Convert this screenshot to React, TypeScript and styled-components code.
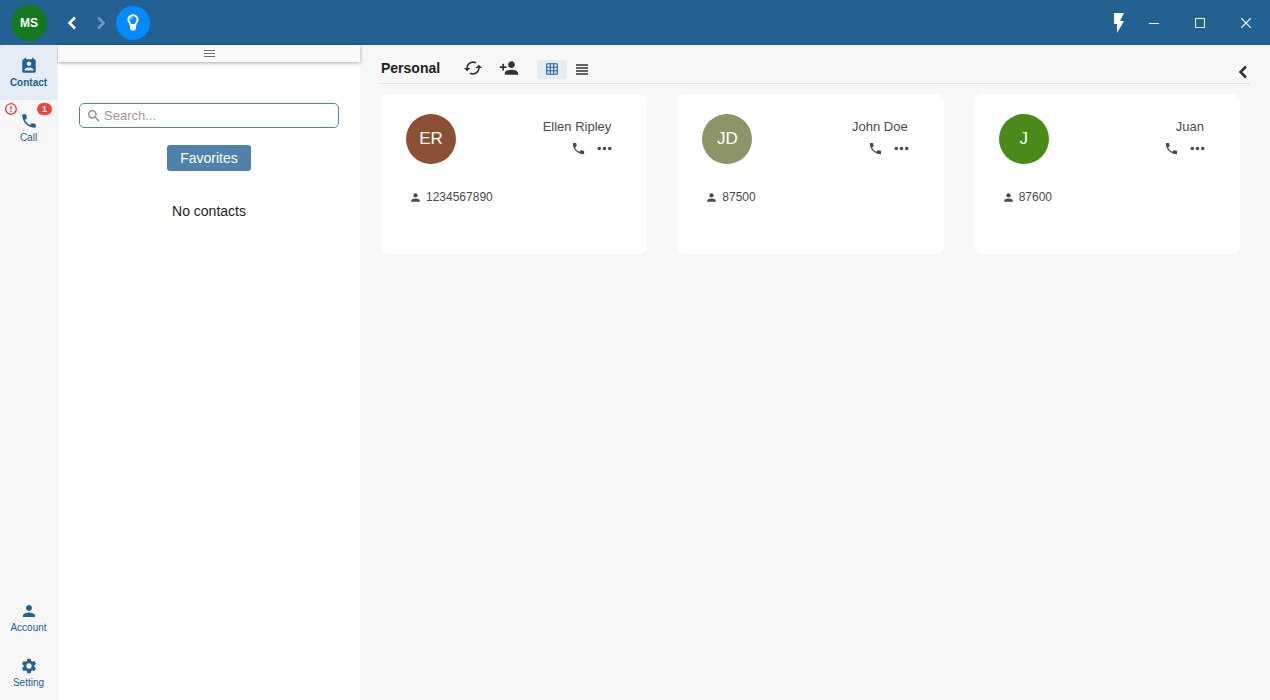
import React from 'react';
import styled, { createGlobalStyle, css } from 'styled-components';
import {
  MdCached,
  MdErrorOutline,
  MdFlashOn,
  MdGridOn,
  MdMoreHoriz,
  MdPermContactCalendar,
  MdPerson,
  MdPersonAdd,
  MdPhone,
  MdSearch,
  MdSettings,
} from 'react-icons/md';

const Global = createGlobalStyle`
  * { box-sizing: border-box; }
  body {
    margin: 0;
    font-family: "Liberation Sans", Arial, sans-serif;
    font-size: 14px;
    color: #212121;
    background: #f7f7f7;
  }
  button { font: inherit; color: inherit; border: 0; padding: 0; background: none; cursor: pointer; }
  svg { display: block; flex: none; }
`;

const Shell = styled.div`
  display: flex;
  flex-direction: column;
  min-height: 100vh;
`;

const TitleBar = styled.header`
  display: flex;
  align-items: center;
  height: 45px;
  padding: 0 1px 0 11px;
  background: #236192;
  color: #fff;
`;

const Avatar = styled.span<{ $color: string; $size: number }>`
  display: flex;
  flex: none;
  align-items: center;
  justify-content: center;
  width: ${(p) => p.$size}px;
  height: ${(p) => p.$size}px;
  border-radius: 50%;
  background: ${(p) => p.$color};
  color: #fff;
  font-size: 17px;
`;

const UserButton = styled.button`
  ${Avatar} { font-size: 12px; font-weight: bold; }
`;

const History = styled.nav`
  display: flex;
  align-items: center;
  gap: 14px;
  margin: 0 8px 0 17px;
`;

const ArrowButton = styled.button`
  display: flex;
  align-items: center;
  justify-content: center;
  width: 15px;
  height: 20px;
  &:disabled { opacity: 0.35; }
`;

const TipButton = styled.button`
  display: flex;
  align-items: center;
  justify-content: center;
  width: 34px;
  height: 34px;
  border-radius: 50%;
  background: #058aff;
`;

const WindowControls = styled.div`
  display: flex;
  align-items: center;
  margin-left: auto;
`;

const WindowButton = styled.button<{ $narrow?: boolean }>`
  display: flex;
  align-items: center;
  justify-content: center;
  width: ${(p) => (p.$narrow ? 24 : 46)}px;
  height: 45px;
`;

const Body = styled.div`
  display: flex;
  flex: 1;
`;

const Rail = styled.nav`
  display: flex;
  flex-direction: column;
  width: 58px;
  border-right: 1px solid #f0f0f0;
`;

const RailButton = styled.button<{ $active?: boolean; $bottom?: boolean }>`
  position: relative;
  display: flex;
  flex-direction: column;
  align-items: center;
  gap: 2px;
  height: 55px;
  padding-top: 12px;
  font-size: 10px;
  line-height: 12px;
  color: #236192;
  ${(p) => p.$active && css`background: #e4ecf6; font-weight: bold;`}
  ${(p) => p.$bottom && css`margin-top: auto;`}
`;

const Badge = styled.span`
  position: absolute;
  top: 3px;
  right: 5px;
  width: 15px;
  height: 12px;
  border-radius: 6px;
  background: #f44336;
  color: #fff;
  font-size: 9px;
  font-weight: bold;
  text-align: center;
`;

const Alert = styled.span`
  position: absolute;
  top: 2px;
  left: 4px;
  color: #e02020;
`;

const Sidebar = styled.aside`
  display: flex;
  flex-direction: column;
  align-items: center;
  width: 302px;
  background: #fff;
`;

const Handle = styled.button`
  display: flex;
  align-items: center;
  justify-content: center;
  width: 100%;
  height: 17px;
  background: #fafafa;
  color: #707070;
  box-shadow: 0 1px 4px rgba(0, 0, 0, 0.35);
`;

const SearchBox = styled.label`
  display: flex;
  align-items: center;
  gap: 2px;
  width: 260px;
  height: 25px;
  margin-top: 41px;
  padding: 0 6px;
  border: 1px solid #4f81ab;
  border-radius: 5px;
  color: #8a8a8a;
`;

const SearchInput = styled.input`
  flex: 1;
  min-width: 0;
  padding: 0;
  border: 0;
  outline: 0;
  background: none;
  font: inherit;
  font-size: 13px;
  &::placeholder { color: #999; opacity: 1; }
`;

const FavoritesButton = styled.button`
  width: 84px;
  height: 26px;
  margin-top: 17px;
  border-radius: 3px;
  background: #4f81ab;
  color: #fff;
`;

const EmptyText = styled.p`
  margin: 32px 0 0;
  line-height: 16px;
`;

const Main = styled.main`
  flex: 1;
  min-width: 0;
  padding: 0 20px 0 21px;
`;

const Toolbar = styled.div`
  display: flex;
  align-items: center;
  height: 39px;
  padding-top: 8px;
  border-bottom: 1px solid #e2e2e2;
  color: #333;
`;

const Heading = styled.h1`
  margin: 0 18px 0 0;
  font-size: 14px;
  line-height: 16px;
  color: #212121;
`;

const IconButton = styled.button<{ $active?: boolean }>`
  display: flex;
  align-items: center;
  justify-content: center;
  width: 30px;
  height: 19px;
  border-radius: 4px;
  ${(p) => p.$active && css`background: #e4ecf6; color: #236192;`}
`;

const Actions = styled.div`
  display: flex;
  gap: 6px;
  margin-right: 13px;
`;

const ViewSwitch = styled.div`
  display: flex;
  padding-top: 2px;
`;

const CollapseButton = styled.button`
  display: flex;
  align-self: flex-end;
  margin: 0 2px 4px auto;
`;

const Cards = styled.ul`
  display: grid;
  grid-template-columns: repeat(3, 1fr);
  gap: 30px;
  margin: 10px 10px 0 0;
  padding: 0;
  list-style: none;
`;

const Card = styled.li`
  height: 160px;
  padding: 20px 32px 0 25px;
  border-radius: 8px;
  background: #fff;
  color: #4a4a4a;
`;

const CardTop = styled.div`
  display: flex;
  justify-content: space-between;
`;

const CardInfo = styled.div`
  display: flex;
  flex-direction: column;
  align-items: flex-end;
  gap: 2px;
  padding-top: 4px;
`;

const Name = styled.h2`
  margin: 0 4px 0 0;
  font-size: 13px;
  font-weight: normal;
  line-height: 18px;
`;

const CardActions = styled.div`
  display: flex;
  align-items: center;
  gap: 8px;
`;

const Extension = styled.p`
  display: flex;
  align-items: center;
  gap: 4px;
  margin: 25px 0 0 3px;
  font-size: 12px;
  line-height: 16px;
`;

const contacts = [
  { name: 'Ellen Ripley', initials: 'ER', number: '1234567890', color: '#8b4f33' },
  { name: 'John Doe', initials: 'JD', number: '87500', color: '#8d9467' },
  { name: 'Juan', initials: 'J', number: '87600', color: '#4a8a18' },
];

const Chevron = ({ flip = false }: { flip?: boolean }) => (
  <svg width="10" height="14" viewBox="0 0 10 14" fill="none" stroke="currentColor" strokeWidth="2.5">
    <path d={flip ? 'M2 1.500 7.500 7 2 12.500' : 'M8 1.500 2.500 7 8 12.500'} />
  </svg>
);

const Bulb = () => (
  <svg width="12" height="17" viewBox="0 0 12 17" fill="none" stroke="#fff">
    <path d="M6 1.200a4.500 4.500 0 0 1 4.600 4.500c0 2.200-2 2.800-2.200 5.300H3.600c-.2-2.500-2.200-3.100-2.200-5.300A4.500 4.500 0 0 1 6 1.200z" strokeWidth="2" />
    <path d="M3.800 5.800A2.200 2.200 0 0 1 6 3.600" strokeWidth=".7" />
    <path d="M3 10.500h6v4L7.800 16.500H4.200L3 14.500z" fill="#fff" stroke="none" />
  </svg>
);

export default function App() {
  return (
    <Shell>
      <Global />
      <TitleBar>
        <UserButton aria-label="Profile"><Avatar $color="#14781e" $size={36}>MS</Avatar></UserButton>
        <History>
          <ArrowButton aria-label="Back"><Chevron /></ArrowButton>
          <ArrowButton aria-label="Forward" disabled><Chevron flip /></ArrowButton>
        </History>
        <TipButton aria-label="Tips"><Bulb /></TipButton>
        <WindowControls>
          <WindowButton $narrow aria-label="Quick actions"><MdFlashOn size={24} /></WindowButton>
          <WindowButton aria-label="Minimize">
            <svg width="10" height="10" stroke="#fff"><path d="M0 5.500h10" /></svg>
          </WindowButton>
          <WindowButton aria-label="Maximize">
            <svg width="10" height="10" stroke="#fff" fill="none"><path d="M.5.5h9v9h-9z" /></svg>
          </WindowButton>
          <WindowButton aria-label="Close">
            <svg width="10" height="10" stroke="#fff" strokeWidth="1.200"><path d="M0 0l10 10M10 0L0 10" /></svg>
          </WindowButton>
        </WindowControls>
      </TitleBar>
      <Body>
        <Rail>
          <RailButton $active><MdPermContactCalendar size={18} />Contact</RailButton>
          <RailButton>
            <MdPhone size={18} />Call
            <Badge>1</Badge>
            <Alert><MdErrorOutline size={14} /></Alert>
          </RailButton>
          <RailButton $bottom><MdPerson size={18} />Account</RailButton>
          <RailButton><MdSettings size={18} />Setting</RailButton>
        </Rail>
        <Sidebar>
          <Handle aria-label="Toggle panel">
            <svg width="11" height="7" stroke="currentColor"><path d="M0 .5h11M0 3.500h11M0 6.500h11" /></svg>
          </Handle>
          <SearchBox>
            <MdSearch size={16} />
            <SearchInput type="search" placeholder="Search..." aria-label="Search" />
          </SearchBox>
          <FavoritesButton>Favorites</FavoritesButton>
          <EmptyText>No contacts</EmptyText>
        </Sidebar>
        <Main>
          <Toolbar>
            <Heading>Personal</Heading>
            <Actions>
              <IconButton aria-label="Refresh"><MdCached size={20} /></IconButton>
              <IconButton aria-label="Add contact"><MdPersonAdd size={20} /></IconButton>
            </Actions>
            <ViewSwitch>
              <IconButton $active aria-label="Grid view"><MdGridOn size={14} /></IconButton>
              <IconButton aria-label="List view">
                <svg width="12" height="11" stroke="currentColor" strokeWidth="1.500"><path d="M0 1h12M0 4h12M0 7h12M0 10h12" /></svg>
              </IconButton>
            </ViewSwitch>
            <CollapseButton aria-label="Collapse"><Chevron /></CollapseButton>
          </Toolbar>
          <Cards>
            {contacts.map((c) => (
              <Card key={c.name}>
                <CardTop>
                  <Avatar $color={c.color} $size={50}>{c.initials}</Avatar>
                  <CardInfo>
                    <Name>{c.name}</Name>
                    <CardActions>
                      <button aria-label={`Call ${c.name}`}><MdPhone size={15} /></button>
                      <button aria-label={`More for ${c.name}`}><MdMoreHoriz size={21} /></button>
                    </CardActions>
                  </CardInfo>
                </CardTop>
                <Extension><MdPerson size={13} />{c.number}</Extension>
              </Card>
            ))}
          </Cards>
        </Main>
      </Body>
    </Shell>
  );
}
